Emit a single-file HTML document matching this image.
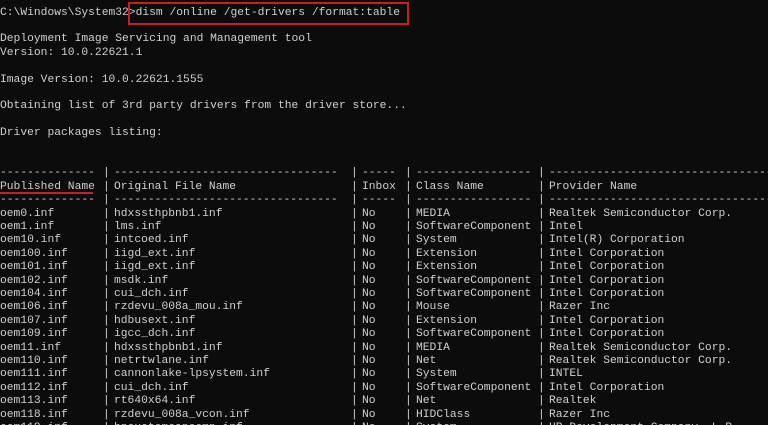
<!DOCTYPE html>
<html><head><meta charset="utf-8"><style>
html,body{margin:0;padding:0;background:#0c0c0c;width:768px;height:425px;overflow:hidden;}
body{position:relative;font-family:"Liberation Mono",monospace;font-size:11.3px;color:#d0d0d0;}
.l{position:absolute;left:0;height:13.4px;line-height:13.4px;white-space:pre;width:800px;margin-top:1.5px;}
.l span{position:absolute;top:0;white-space:pre;}
.a{left:0}.b{left:114px}.c{left:362px}.d{left:416px}.e{left:549px}
.s1{left:103px}.s2{left:351px}.s3{left:405px}.s4{left:538px}
.box{position:absolute;left:128px;top:2px;width:277px;height:19px;border:2px solid #c8201e;}
.ul{position:absolute;left:0;top:192px;width:93px;height:2px;background:#c8201e;}
</style></head><body>
<div class="l" style="top:5px">C:\Windows\System32&gt;dism /online /get-drivers /format:table</div>
<div class="box"></div>
<div class="l" style="top:31.8px">Deployment Image Servicing and Management tool</div>
<div class="l" style="top:45.2px">Version: 10.0.22621.1</div>
<div class="l" style="top:72px">Image Version: 10.0.22621.1555</div>
<div class="l" style="top:98.8px">Obtaining list of 3rd party drivers from the driver store...</div>
<div class="l" style="top:125.6px">Driver packages listing:</div>
<div class="l" style="top:165.8px"><span class="a">--------------</span><span class="s1">|</span><span class="b">---------------------------------</span><span class="s2">|</span><span class="c">-----</span><span class="s3">|</span><span class="d">-----------------</span><span class="s4">|</span><span class="e">---------------------------------</span></div>
<div class="l" style="top:179.2px"><span class="a">Published Name</span><span class="s1">|</span><span class="b">Original File Name</span><span class="s2">|</span><span class="c">Inbox</span><span class="s3">|</span><span class="d">Class Name</span><span class="s4">|</span><span class="e">Provider Name</span></div>
<div class="ul"></div>
<div class="l" style="top:192.6px"><span class="a">--------------</span><span class="s1">|</span><span class="b">---------------------------------</span><span class="s2">|</span><span class="c">-----</span><span class="s3">|</span><span class="d">-----------------</span><span class="s4">|</span><span class="e">---------------------------------</span></div>
<div class="l" style="top:206px"><span class="a">oem0.inf</span><span class="s1">|</span><span class="b">hdxssthpbnb1.inf</span><span class="s2">|</span><span class="c">No</span><span class="s3">|</span><span class="d">MEDIA</span><span class="s4">|</span><span class="e">Realtek Semiconductor Corp.</span></div>
<div class="l" style="top:219.4px"><span class="a">oem1.inf</span><span class="s1">|</span><span class="b">lms.inf</span><span class="s2">|</span><span class="c">No</span><span class="s3">|</span><span class="d">SoftwareComponent</span><span class="s4">|</span><span class="e">Intel</span></div>
<div class="l" style="top:232.8px"><span class="a">oem10.inf</span><span class="s1">|</span><span class="b">intcoed.inf</span><span class="s2">|</span><span class="c">No</span><span class="s3">|</span><span class="d">System</span><span class="s4">|</span><span class="e">Intel(R) Corporation</span></div>
<div class="l" style="top:246.2px"><span class="a">oem100.inf</span><span class="s1">|</span><span class="b">iigd_ext.inf</span><span class="s2">|</span><span class="c">No</span><span class="s3">|</span><span class="d">Extension</span><span class="s4">|</span><span class="e">Intel Corporation</span></div>
<div class="l" style="top:259.6px"><span class="a">oem101.inf</span><span class="s1">|</span><span class="b">iigd_ext.inf</span><span class="s2">|</span><span class="c">No</span><span class="s3">|</span><span class="d">Extension</span><span class="s4">|</span><span class="e">Intel Corporation</span></div>
<div class="l" style="top:273px"><span class="a">oem102.inf</span><span class="s1">|</span><span class="b">msdk.inf</span><span class="s2">|</span><span class="c">No</span><span class="s3">|</span><span class="d">SoftwareComponent</span><span class="s4">|</span><span class="e">Intel Corporation</span></div>
<div class="l" style="top:286.4px"><span class="a">oem104.inf</span><span class="s1">|</span><span class="b">cui_dch.inf</span><span class="s2">|</span><span class="c">No</span><span class="s3">|</span><span class="d">SoftwareComponent</span><span class="s4">|</span><span class="e">Intel Corporation</span></div>
<div class="l" style="top:299.8px"><span class="a">oem106.inf</span><span class="s1">|</span><span class="b">rzdevu_008a_mou.inf</span><span class="s2">|</span><span class="c">No</span><span class="s3">|</span><span class="d">Mouse</span><span class="s4">|</span><span class="e">Razer Inc</span></div>
<div class="l" style="top:313.2px"><span class="a">oem107.inf</span><span class="s1">|</span><span class="b">hdbusext.inf</span><span class="s2">|</span><span class="c">No</span><span class="s3">|</span><span class="d">Extension</span><span class="s4">|</span><span class="e">Intel Corporation</span></div>
<div class="l" style="top:326.6px"><span class="a">oem109.inf</span><span class="s1">|</span><span class="b">igcc_dch.inf</span><span class="s2">|</span><span class="c">No</span><span class="s3">|</span><span class="d">SoftwareComponent</span><span class="s4">|</span><span class="e">Intel Corporation</span></div>
<div class="l" style="top:340px"><span class="a">oem11.inf</span><span class="s1">|</span><span class="b">hdxssthpbnb1.inf</span><span class="s2">|</span><span class="c">No</span><span class="s3">|</span><span class="d">MEDIA</span><span class="s4">|</span><span class="e">Realtek Semiconductor Corp.</span></div>
<div class="l" style="top:353.4px"><span class="a">oem110.inf</span><span class="s1">|</span><span class="b">netrtwlane.inf</span><span class="s2">|</span><span class="c">No</span><span class="s3">|</span><span class="d">Net</span><span class="s4">|</span><span class="e">Realtek Semiconductor Corp.</span></div>
<div class="l" style="top:366.8px"><span class="a">oem111.inf</span><span class="s1">|</span><span class="b">cannonlake-lpsystem.inf</span><span class="s2">|</span><span class="c">No</span><span class="s3">|</span><span class="d">System</span><span class="s4">|</span><span class="e">INTEL</span></div>
<div class="l" style="top:380.2px"><span class="a">oem112.inf</span><span class="s1">|</span><span class="b">cui_dch.inf</span><span class="s2">|</span><span class="c">No</span><span class="s3">|</span><span class="d">SoftwareComponent</span><span class="s4">|</span><span class="e">Intel Corporation</span></div>
<div class="l" style="top:393.6px"><span class="a">oem113.inf</span><span class="s1">|</span><span class="b">rt640x64.inf</span><span class="s2">|</span><span class="c">No</span><span class="s3">|</span><span class="d">Net</span><span class="s4">|</span><span class="e">Realtek</span></div>
<div class="l" style="top:407px"><span class="a">oem118.inf</span><span class="s1">|</span><span class="b">rzdevu_008a_vcon.inf</span><span class="s2">|</span><span class="c">No</span><span class="s3">|</span><span class="d">HIDClass</span><span class="s4">|</span><span class="e">Razer Inc</span></div>
<div class="l" style="top:420.4px"><span class="a">oem119.inf</span><span class="s1">|</span><span class="b">hpcustomcapcomp.inf</span><span class="s2">|</span><span class="c">No</span><span class="s3">|</span><span class="d">System</span><span class="s4">|</span><span class="e">HP Development Company, L.P.</span></div>
</body></html>
